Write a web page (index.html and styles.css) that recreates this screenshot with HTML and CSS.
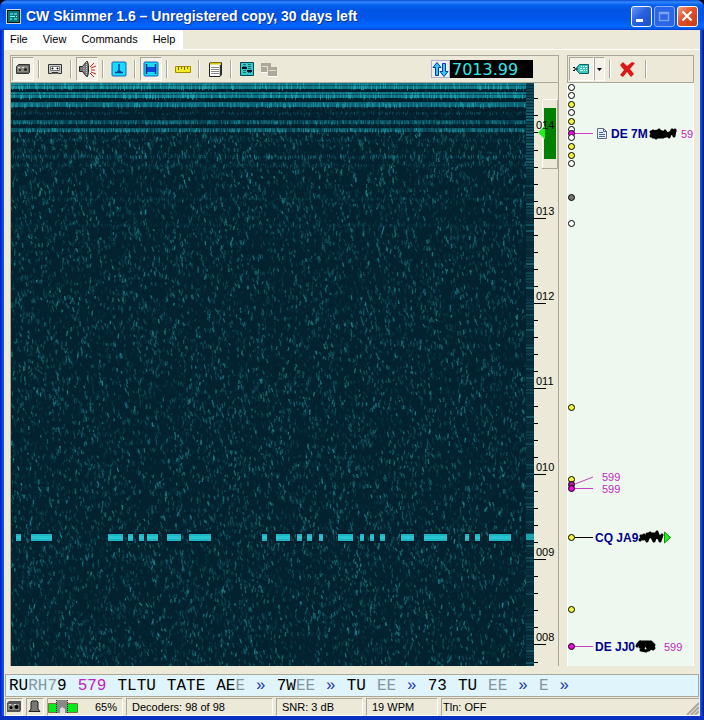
FILE: index.html
```html
<!DOCTYPE html>
<html lang="en">
<head>
<meta charset="utf-8">
<title>CW Skimmer 1.6</title>
<link rel="stylesheet" href="styles.css">
</head>
<body>
<div class="window">
  <header class="titlebar">
    <svg class="app-icon" width="15" height="15" viewBox="0 0 15 15" aria-hidden="true"><rect x=".5" y=".5" width="14" height="14" fill="#e8f0e8" stroke="#c8d8e8"/><rect x="1.500" y="1.500" width="12" height="12" fill="#087878" stroke="#111"/><path d="M4 5h3m1 0h3M4 7.500h5m1 0h1M4 10h2m2 0h3" stroke="#8ff" stroke-width="1"/></svg>
    <h1>CW Skimmer 1.6 – Unregistered copy, 30 days left</h1>
    <div class="window-buttons">
      <button class="win-btn" aria-label="Minimize"><svg width="19" height="19"><path d="M4 12h7v3H4z" fill="#fff"/></svg></button>
      <button class="win-btn dim" aria-label="Maximize"><svg width="19" height="19"><path d="M4.500 5.500h9v8h-9zM4 6.500h10" fill="none" stroke="#7ba2f2" stroke-width="1.500"/></svg></button>
      <button class="win-btn close" aria-label="Close"><svg width="19" height="19"><path d="M4.500 4.500l9 9m0-9l-9 9" stroke="#fff" stroke-width="2.300"/></svg></button>
    </div>
  </header>
  <div class="client">
    <div class="menu-row"><nav class="menu"><button>File</button><button>View</button><button>Commands</button><button>Help</button></nav></div>
    <main class="workspace">
      <section class="receiver">
        <div class="toolbar">
          <button class="tool pressed" aria-label="Radio"><svg width="16" height="16"><path d="M1.500 5.500l2-2h11v8l-1 1h-12z" fill="#666" stroke="#333"/><path d="M2 5h11v6H2z" fill="#8a8a80"/><path d="M3 6h2v1H3zM7 6h2v1H7z" fill="#ddd"/><circle cx="5" cy="9" r="1" fill="#111"/><circle cx="10.500" cy="8.500" r="1.500" fill="#222"/></svg></button>
          <i class="sep"></i>
          <button class="tool" aria-label="Recorder"><svg width="16" height="16"><path d="M1.500 3.500h13v9h-13z" fill="#ccc" stroke="#333"/><path d="M3.500 5.500h9v4h-9z" fill="#fff" stroke="#777"/><circle cx="5.500" cy="7.500" r="1"/><circle cx="10.500" cy="7.500" r="1"/><path d="M4 12.500l1-1h6l1 1" fill="#999" stroke="#333"/></svg></button>
          <i class="sep"></i>
          <button class="tool pressed" aria-label="Speaker"><svg width="18" height="18"><path d="M1.500 6.500h3l4-5h1l1 4v7l-1 4h-1l-4-5h-3z" fill="#777" stroke="#222"/><path d="M6 6v6M8.500 2v14" stroke="#ccc" stroke-dasharray="1 1"/><path d="M12 7l4-4m-3 5l5-2m-5 4h4m-4 2l5 2m-6-1l4 4" stroke="#c42a20"/></svg></button>
          <i class="sep"></i>
          <button class="tool" aria-label="Spectrum"><svg width="16" height="16"><rect x="1" y="1" width="14" height="14" rx="1" fill="#18dcff" stroke="#1464b4"/><path d="M8 3v8M4 11.500h8M6 10.500h4" stroke="#06408c" stroke-width="1.500"/></svg></button>
          <i class="sep"></i>
          <button class="tool pressed" aria-label="Filter"><svg width="16" height="16"><rect x="1" y="1" width="14" height="14" rx="1" fill="#18dcff" stroke="#1464b4"/><path d="M3.500 3v10M12.500 3v10" stroke="#042878" stroke-width="1.500"/><path d="M4 6h8v5H4z" fill="#0848dc"/></svg></button>
          <i class="sep"></i>
          <button class="tool" aria-label="Ruler"><svg width="16" height="16"><path d="M.5 5.500h15v6H.5z" fill="#f4ec20" stroke="#a09000"/><path d="M3.500 6v3m3-3v2m3-2v3m3-3v2" stroke="#756a00"/></svg></button>
          <i class="sep"></i>
          <button class="tool" aria-label="Notes"><svg width="16" height="16"><path d="M3 1.500h11.500v12l-1.500 2H2.500V3z" fill="#fff" stroke="#222"/><path d="M3 2.500h11" stroke="#d4c414" stroke-width="2"/><path d="M4 6.500h8m-8 2h8m-8 2h8m-8 2h8" stroke="#888"/><path d="M13.500 4v11" stroke="#333" stroke-width="1.500"/></svg></button>
          <i class="sep"></i>
          <button class="tool" aria-label="Settings"><svg width="16" height="16"><path d="M1.500 1.500h13v13h-13z" fill="#38c8c4" stroke="#074858"/><path d="M5.500 3v10m5-10v10" stroke="#167070" stroke-width="3" stroke-dasharray="1 1"/><path d="M3 6h5v2H3zM8 9h5v2H8z" fill="#012"/></svg></button>
          <button class="tool" aria-label="Windows" disabled><svg width="16" height="16"><path d="M0 2h10v9H0zM7 6h9v9H7z" fill="#aca899"/><path d="M1 5.500h6M8 9.500h7M6.500 6v5" stroke="#e4e0d0"/><path d="M0 11.500h6m1 4h9" stroke="#fff"/></svg></button>
          <div class="tuner">
            <button class="swap" aria-label="Swap frequency"><svg width="17" height="17"><path d="M5 1.500l4 5H6.500v8h-3v-8H1z" fill="#30c8ff" stroke="#0838a0"/><path d="M12 15.500l-4-5h2.500v-8h3v8H16z" fill="#30c8ff" stroke="#0838a0"/></svg></button>
            <output class="frequency">7013.99</output>
          </div>
        </div>
        <div class="band">
          <div class="waterfall"><canvas id="waterfall"></canvas></div>
          <svg class="scale" width="24" height="583" role="img" aria-label="Frequency scale">
            <path class="thumb-face" d="M8 17h15v68H8z"/>
            <path class="thumb-light" d="M8.500 85V16.500H23"/><path class="thumb-dark" d="M8 85.500h15.500V17"/>
            <path d="M10 25h12v51H10z" fill="#008000"/>
            <path class="tick" d="M0 15.500h4M0 32.500h4M0 49.500h4M0 67.500h4M0 84.500h4M0 101.500h4M0 118.500h4M0 135.500h12M0 152.500h4M0 169.500h4M0 186.500h4M0 203.500h4M0 220.500h12M0 237.500h4M0 254.500h4M0 271.500h4M0 288.500h4M0 305.500h12M0 323.500h4M0 340.500h4M0 357.500h4M0 374.500h4M0 391.500h12M0 408.500h4M0 425.500h4M0 442.500h4M0 459.500h4M0 476.500h12M0 493.500h4M0 510.500h4M0 527.500h4M0 544.500h4M0 561.500h12M0 579.500h4"/>
            <path d="M4 49.500l7-7v14z" fill="#20f020"/>
            <g class="scale-text"><text x="2" y="46">014</text><text x="2" y="132">013</text><text x="2" y="217">012</text><text x="2" y="302">011</text><text x="2" y="388">010</text><text x="2" y="473">009</text><text x="2" y="558">008</text></g>
          </svg>
        </div>
      </section>
      <aside class="stations">
        <div class="toolbar">
          <button class="tool pressed wide" aria-label="Labels"><svg width="18" height="16"><path d="M2.500 8l4-4.500h9v9h-9z" fill="#38c8c0" stroke="#08605c"/><path d="M8 5.500h1m1 0h1m1 0h2m-7 2h2m1 0h2m1 0h1m-7 2h3m1 0h1m1 0h1" stroke="#e4ffff"/><path d="M0 6.500h2M0 9.500h2M1 8h4" stroke="#111"/></svg></button>
          <button class="tool drop pressed" aria-label="Label options"><svg width="5" height="3"><path d="M0 0h5L2.500 3z"/></svg></button>
          <i class="sep"></i>
          <button class="tool delete" aria-label="Delete"><svg width="16" height="16"><path d="M3 1l4 4 5-4 3 1-5 6 4 5-3 3-4-5-4 5-3-2 4-5-4-5z" fill="#dc1818"/></svg></button>
          <i class="sep"></i>
        </div>
        <svg class="map" width="124" height="583" role="img" aria-label="Stations">
          <g class="link"><path d="M7 50.500h18M7 401l18-7M7 405.500h18M7 563.500h18"/><path class="cq" d="M7 454.500h18"/></g>
          <g class="dot">
            <circle cx="3.500" cy="4.500" r="3"/><circle cx="3.500" cy="12.500" r="3"/><circle class="y" cx="3.500" cy="21.500" r="3"/><circle cx="3.500" cy="29.500" r="3"/><circle class="y" cx="3.500" cy="38.500" r="3"/><circle cx="3.500" cy="46.500" r="3"/><circle class="m" cx="3.500" cy="50.500" r="3"/><circle cx="3.500" cy="54.500" r="3"/><path class="m" d="M1 49.500h5v2H1z" stroke="none"/><circle class="y" cx="3.500" cy="63.500" r="3"/><circle class="y" cx="3.500" cy="72.500" r="3"/><circle cx="3.500" cy="80.500" r="3"/><circle class="g" cx="3.500" cy="114.500" r="3"/><circle cx="3.500" cy="140.500" r="3"/><circle class="y" cx="3.500" cy="324.500" r="3"/><circle class="y" cx="3.500" cy="396.500" r="3"/><circle class="d" cx="3.500" cy="401.500" r="3"/><circle class="m" cx="3.500" cy="405.500" r="3"/><circle class="y" cx="3.500" cy="454.500" r="3"/><circle class="y" cx="3.500" cy="526.500" r="3"/><circle class="m" cx="3.500" cy="563.500" r="3"/>
          </g>
          <path d="M29.500 45.500h6l3 3v7h-9z" fill="#e4f0ff" stroke="#668"/><path d="M35.500 45.500v3h3M31 49.500h4m-4 2h6m-6 2h6" fill="none" stroke="#4868a0"/>
          <g class="call"><text x="43" y="55">DE 7M</text><text x="27" y="459">CQ JA9</text><text x="27" y="568">DE JJ0</text></g>
          <g class="report"><text x="113" y="55">599</text><text x="34" y="398">599</text><text x="34" y="410">599</text><text x="96" y="568">599</text></g>
          <g class="scribble"><path d="M83 53l2-5 3 7 3-8 4 7 2-6 4 6 3-7 2 6 1-6"/><path d="M83 49l8-1 8 3 8-3M85 52l7-1 7 1 5-2M85 54l8 0 5-1"/><path d="M72 457l4-5 3 6 3-8 4 8 3-9 3 9 2-6"/><path d="M73 453l8 1 7-2 5 2M75 456l8-3 8 2M79 451l10 0"/><path d="M69 563l3-4 3 7 2-6 4 7 3-7 2 5"/><path d="M70 561l7 1 6-2 3 2M72 564l6-2 7 1M73 567l5 1 5-3 2 1M72 559h11"/></g>
          <path d="M96.500 449v11l6-5.500z" fill="#20f020" stroke="#089008"/>
        </svg>
      </aside>
    </main>
    <div class="decoded">
      <span>RU<s>RH7</s>9</span><span class="rst">579</span><span>TLTU</span><span>TATE</span><span>AE<s>E</s></span><b>»</b><span>7W<s>EE</s></span><b>»</b><span>TU</span><s>EE</s><b>»</b><span>73</span><span>TU</span><s>EE</s><b>»</b><s>E</s><b>»</b>
    </div>
    <footer class="status">
      <div class="cell icon"><svg width="16" height="14"><path d="M1 4l2-2h12v9l-1 2H1z" fill="#555"/><path d="M2 5h11v6H2z" fill="#8a8a80"/><circle cx="5" cy="8.500" r="1.500"/><circle cx="10.500" cy="8" r="2"/><path d="M3 5.500h2m3 0h2" stroke="#ddd"/></svg></div>
      <div class="cell icon"><svg width="15" height="14"><path d="M4 10V3l1-1h5l1 1v7l2 2.500H2z" fill="#777" stroke="#222"/></svg></div>
      <div class="cell load"><svg width="30" height="14"><path d="M.5 3.500h29v9H.5z" fill="#00ec18" stroke="#807040"/><path d="M9 0h10v13H9z" fill="#888"/><path d="M8.500 0v13m11-13v13" stroke="#222" stroke-dasharray="1 1"/><path d="M12 13V9l2-2 3 2v4z" fill="#ddd"/></svg><span>65%</span></div>
      <div class="cell decoders">Decoders: 98 of 98</div>
      <div class="cell snr">SNR: 3 dB</div>
      <div class="cell wpm">19 WPM</div>
      <div class="cell tuning">Tln: OFF<svg class="grip" width="13" height="13" aria-hidden="true"><path d="M1 13L13 1M5 13l8-8M9 13l4-4" stroke="#aca899" stroke-width="2"/></svg></div>
    </footer>
  </div>
</div>
<script src="waterfall.js"></script>
</body>
</html>
```
FILE: styles.css
```css
* { box-sizing: border-box; }
body {
  margin: 0;
  background: #05051a;
  color: #000;
  font: 11px/14px "Liberation Sans", sans-serif;
}
button { margin: 0; padding: 0; border: 0; background: none; color: inherit; font: inherit; }
svg { flex: none; }
button svg { display: block; }
s { color: #84979c; text-decoration: none; }

.window {
  display: flex;
  flex-direction: column;
  height: 100vh;
  padding: 0 4px 4px;
  border-radius: 8px 8px 0 0;
  background: linear-gradient(90deg, #0019cf, #1660ea 4px, #1660ea calc(100% - 4px), #00138c);
  overflow: hidden;
  box-shadow: inset 0 -4px #0831c0;
}
.titlebar {
  display: flex;
  flex: none;
  align-items: center;
  height: 30px;
  margin: 0 -4px;
  padding: 2px 6px 0 6px;
  background: linear-gradient(#0a4ad0, #3088fc 2px, #0560ee 5px, #0054e3 10px, #0058ec 20px, #0066ff 25px, #0060f4 28px, #003cc8);
}
.titlebar h1 {
  flex: 1;
  margin: 0 0 0 5px;
  color: #fff;
  font: bold 14px/18px "Liberation Sans", sans-serif;
  text-shadow: 1px 1px #06318e;
  white-space: nowrap;
}
.window-buttons { display: flex; gap: 2px; }
.win-btn {
  width: 21px;
  height: 21px;
  border: 1px solid #fff;
  border-radius: 3px;
  background: linear-gradient(135deg, #6c98f4, #2860e0 45%, #1c50d0);
}
.win-btn.dim { border-color: #8badf0; background: #2c66e6; }
.win-btn.close { background: linear-gradient(135deg, #f0a080, #e05028 45%, #c83c14); }

.client { display: flex; flex: 1; flex-direction: column; min-height: 0; background: #ece9d8; }
.menu-row { display: flex; flex: none; height: 20px; border-bottom: 1px solid #fff; }
.menu { display: flex; gap: 15px; padding: 0 8px 2px 6px; background: #fff; }

.workspace { display: flex; flex: 1; gap: 8px; min-height: 0; padding: 5px 6px 8px; }
.receiver, .stations { display: flex; flex-direction: column; min-width: 0; min-height: 0; }
.receiver { flex: 1; }
.stations { width: 127px; }
.toolbar {
  display: flex;
  flex: none;
  align-items: center;
  height: 28px;
  padding-left: 1px;
  border: 1px solid #aca899;
}
.tool {
  display: flex;
  flex: none;
  align-items: center;
  justify-content: center;
  width: 22px;
  height: 24px;
}
.pressed {
  border: 1px solid;
  border-color: #aca899 #fff #fff #aca899;
  background: #f3f1e8;
}
.sep { flex: none; width: 2px; height: 18px; margin: 0 4px; border-left: 1px solid #aca899; border-right: 1px solid #fff; }
.tuner { display: flex; flex: none; height: 18px; margin: 0 25px 0 auto; }
.swap { width: 19px; border: 1px solid #b0b0c8; background: #eee; }
.frequency {
  width: 83px;
  padding-left: 2px;
  background: #000;
  color: #30e8e8;
  font: 16px/19px "DejaVu Sans", sans-serif;
}
.wide { width: 25px; }
.drop { width: 11px; }
.delete { width: 26px; }

.band { display: flex; flex: 1; min-height: 0; border: solid #aca899; border-width: 0 1px; overflow: hidden; }
.waterfall { flex: 1; min-width: 0; overflow: hidden; background: #02242e; }
.waterfall canvas { display: block; }
.scale-text { font-size: 11px; }
.tick { stroke: #000; shape-rendering: crispEdges; }
.thumb-face { fill: #ece9d8; }
.thumb-light { fill: none; stroke: #fff; }
.thumb-dark { fill: none; stroke: #aca899; }

.map { flex: 1; width: 100%; min-height: 0; border: solid; border-width: 0 1px; border-color: #aca899 #fff; background: #eef8ee; }
.link { fill: none; stroke: #c840c0; }
.link .cq { stroke: #000; }
.dot { fill: #fff; stroke: #000; }
.y { fill: #f4f43c; }
.m { fill: #f008e0; }
.d { fill: #b01c9c; }
.g { fill: #777; }
.call { fill: #00008c; font-size: 12px; font-weight: bold; }
.report { fill: #c028c0; font-size: 11px; }
.scribble { fill: none; stroke: #000; stroke-width: 3; stroke-linejoin: round; stroke-linecap: round; }

.decoded {
  display: flex;
  flex: none;
  gap: 11px;
  height: 23px;
  margin: 0 1px;
  padding-left: 3px;
  border: 1px solid #aca899;
  background: #e0f4fc;
  font: 16px/22px "Liberation Mono", monospace;
  white-space: nowrap;
  overflow: hidden;
}
.decoded b { color: #1c3ca0; font-weight: normal; }
.rst { color: #c020c0; }

.status { display: flex; flex: none; gap: 3px; height: 19px; padding: 1px 1px 0; }
.cell {
  flex: none;
  padding: 1px 5px;
  border: 1px solid;
  border-color: #aca899 #fff #fff #aca899;
  white-space: nowrap;
}
.icon { width: 18px; padding: 0; }
.load { display: flex; justify-content: space-between; width: 76px; padding-left: 0; }
.decoders { width: 147px; }
.snr { width: 87px; }
.wpm { width: 72px; }
.tuning { display: flex; flex: 1; justify-content: space-between; padding: 1px 0 0 1px; border-right: 0; }
.grip { align-self: flex-end; }
```
FILE: waterfall.js
```js
// Waterfall: background noise, strong carriers near the band edge, one keyed signal.
const canvas = document.getElementById("waterfall");
const SPECTRUM_WIDTH = 8;
// [top, height, level]
const carriers = [
  [0, 6, 0.85], [9, 6, 0.8], [19, 5, 0.65], [28, 3, 0.3],
  [37, 4, 0.45], [45, 4, 0.55], [55, 3, 0.25], [71, 4, 0.4], [80, 3, 0.25], [114, 3, 0.2], [140, 3, 0.15]
];
// [left, length] of each dot and dash
const keying = [
  [5, 5], [20, 21], [97, 15], [117, 5], [128, 5], [136, 11], [156, 14], [178, 22],
  [251, 5], [265, 14], [286, 5], [296, 5], [308, 4], [327, 15], [349, 4], [359, 4],
  [369, 5], [390, 13], [413, 23], [454, 4], [464, 5], [478, 22]
];

function makeRandom(seed) {
  return () => {
    seed = (seed + 0x6d2b79f5) | 0;
    let t = Math.imul(seed ^ (seed >>> 15), 1 | seed);
    t = (t + Math.imul(t ^ (t >>> 7), 61 | t)) ^ t;
    return ((t ^ (t >>> 14)) >>> 0) / 4294967296;
  };
}

function draw() {
  const w = canvas.width = canvas.parentElement.clientWidth;
  const h = canvas.height = canvas.parentElement.clientHeight;
  const ctx = canvas.getContext("2d");
  const random = makeRandom(7014);
  ctx.fillStyle = "#02222f";
  ctx.fillRect(0, 0, w, h);

  ctx.lineWidth = 1.3;
  const streaks = w * h / 18;
  for (let i = 0; i < streaks; i++) {
    const x = random() * (w - SPECTRUM_WIDTH);
    const y = random() * h;
    const len = 2 + random() * 3;
    const strength = 0.08 + random() * random() * 0.8;
    ctx.strokeStyle = `rgba(34, 142, ${random() < 0.3 ? 125 : 152}, ${strength})`;
    ctx.beginPath();
    ctx.moveTo(x, y);
    ctx.lineTo(x + (random() - 0.4) * 3, y + len);
    ctx.stroke();
  }

  ctx.fillStyle = "rgba(1, 30, 44, 0.7)";
  ctx.fillRect(0, 0, w, 50);
  for (const [y, height, level] of carriers) {
    ctx.fillStyle = `rgba(22, 158, 174, ${level * 0.8})`;
    if (level > 0.4) ctx.fillRect(0, y, w, height);
    for (let x = 0; x < w - SPECTRUM_WIDTH; x += 1) {
      if (random() < 0.6) {
        ctx.fillStyle = `rgba(36, 178, 190, ${level * random()})`;
        ctx.fillRect(x, y + random() * 2, 1, height - random());
      } else if (level < 0.6) {
        ctx.fillStyle = `rgba(1, 36, 50, ${random() * 0.7})`;
        ctx.fillRect(x, y, 1, height);
      }
    }
  }
  ctx.fillStyle = "rgba(1, 30, 44, 0.4)";
  ctx.fillRect(0, 2, w, 1);
  ctx.fillRect(0, 11, w, 1);

  for (const [x, length] of keying) {
    ctx.fillStyle = "rgba(0, 28, 44, 0.8)";
    ctx.fillRect(x - 1, 449, length + 2, 11);
    ctx.fillStyle = "#1db4c4";
    ctx.fillRect(x, 451, length, 7);
    ctx.fillStyle = "#28c4d0";
    ctx.fillRect(x, 453, length, 3);
  }

  // Live spectrum strip at the right edge.
  const left = w - SPECTRUM_WIDTH;
  ctx.fillStyle = "#032836";
  ctx.fillRect(left, 0, SPECTRUM_WIDTH, h);
  for (let y = 0; y < h; y += 3) {
    ctx.fillStyle = `rgba(30, 125, 140, ${y < 85 ? 0.3 + random() * 0.5 : random() * random() * 0.7})`;
    ctx.fillRect(left, y, SPECTRUM_WIDTH, 2);
  }
  ctx.fillStyle = "#1aa2b0";
  ctx.fillRect(left, 451, SPECTRUM_WIDTH, 6);
}

draw();
window.addEventListener("resize", draw);
```
